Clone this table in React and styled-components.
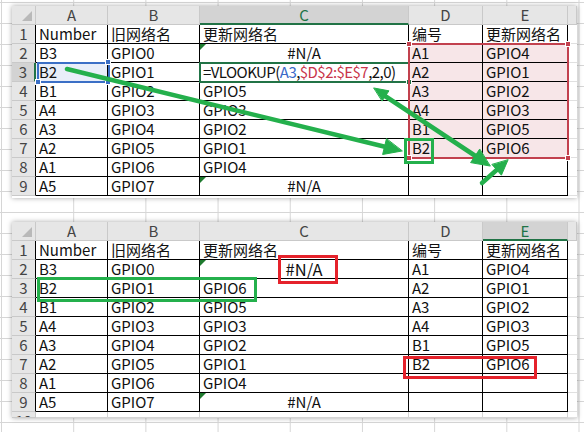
import React from "react";
import styled, { createGlobalStyle, css } from "styled-components";

const GlobalStyle = createGlobalStyle`
  body {
    margin: 0;
    font-family: "Noto Sans CJK SC", "Liberation Sans", sans-serif;
  }
`;

const GREEN = "#24b04c";
const EXCEL = "#217346";

const Page = styled.div`
  width: 584px;
  height: 432px;
  box-sizing: border-box;
  overflow: hidden;
  padding: 6px 0 0 12px;
  display: flex;
  flex-direction: column;
  gap: 24px;
  background-color: #fff;
  background-image: linear-gradient(to right, #d6d6d6 1px, transparent 1px),
    linear-gradient(to bottom, #d6d6d6 1px, transparent 1px);
  background-size: 72.2px 21px;
  background-position: 1px 2px;
`;

const Sheet = styled.div`
  position: relative;
  width: 565px;
  height: ${(p) => p.$h}px;
  background: #fff;
  box-shadow: 0 0 5px rgba(0, 0, 0, 0.35);
`;

const Grid = styled.div`
  display: grid;
  grid-template-columns: 24px 72px 92px 209px 74px 85px 9px;
  grid-template-rows: repeat(10, 19px) ${(p) => (p.$tail ? "6px" : "")};
`;

const ColHead = styled.div`
  box-sizing: border-box;
  background: ${(p) => (p.$active ? "#d3d3d3" : "#e6e6e6")};
  color: ${(p) => (p.$active ? EXCEL : "#444")};
  border-right: 1px solid #c9c9c9;
  border-bottom: ${(p) => (p.$active ? `2px solid ${EXCEL}` : "1px solid #c9c9c9")};
  font-size: 15px;
  line-height: 18px;
  text-align: center;
`;

const Corner = styled(ColHead)`
  position: relative;
  &::after {
    content: "";
    position: absolute;
    right: 3px;
    bottom: 3px;
    border-bottom: 10px solid #b9b9b9;
    border-left: 10px solid transparent;
  }
`;

const RowHead = styled.div`
  box-sizing: border-box;
  overflow: ${(p) => (p.$clip ? "hidden" : "visible")};
  background: ${(p) => (p.$active ? "#d3d3d3" : "#e6e6e6")};
  color: #444;
  font-size: 15px;
  line-height: 18px;
  text-align: center;
  border-bottom: 1px solid #c9c9c9;
  border-right: ${(p) =>
    p.$active ? `2px solid ${EXCEL}` : `1px solid ${p.$line}`};
`;

const Cell = styled.div`
  position: relative;
  box-sizing: border-box;
  padding: 0 3px;
  border-right: 1px solid ${(p) => p.$line};
  border-bottom: 1px solid ${(p) => p.$line};
  background: ${(p) => p.$fill || "transparent"};
  font-size: ${(p) => (p.$big ? 16.5 : 15)}px;
  line-height: 18px;
  color: #111;
  text-align: ${(p) => (p.$center ? "center" : "left")};
  white-space: nowrap;
  ${(p) =>
    p.$err &&
    css`
      &::before {
        content: "";
        position: absolute;
        left: 0;
        top: 0;
        border-top: 6px solid #1e7a2e;
        border-right: 6px solid transparent;
      }
    `}
`;

const Formula = styled.span`
  letter-spacing: -0.55px;
`;

const Spare = styled.div`
  border-bottom: 1px solid #e0e0e0;
`;

const Ref = styled.span`
  color: ${(p) => p.$c};
`;

const Frame = styled.div`
  position: absolute;
  left: ${(p) => p.$x}px;
  top: ${(p) => p.$y}px;
  width: ${(p) => p.$w}px;
  height: ${(p) => p.$h}px;
  box-sizing: border-box;
  border: ${(p) => p.$t || 2}px solid ${(p) => p.$c};
  pointer-events: none;
`;

const Handle = styled.div`
  position: absolute;
  left: ${(p) => p.$x - 3}px;
  top: ${(p) => p.$y - 3}px;
  width: 6px;
  height: 6px;
  background: ${(p) => p.$c};
  border: 1px solid #fff;
  box-sizing: border-box;
`;

const Arrows = styled.svg`
  position: absolute;
  left: 0;
  top: 0;
  pointer-events: none;
`;

function head(x1, y1, x2, y2, len = 18, half = 8) {
  const dx = x2 - x1;
  const dy = y2 - y1;
  const d = Math.hypot(dx, dy);
  const ux = dx / d;
  const uy = dy / d;
  const bx = x2 - ux * len;
  const by = y2 - uy * len;
  return `${x2},${y2} ${bx - uy * half},${by + ux * half} ${bx + uy * half},${by - ux * half}`;
}

const formula = (
  <Formula>
    =VLOOKUP(<Ref $c="#3a6ac8">A3</Ref>,<Ref $c="#c8354a">$D$2:$E$7</Ref>,2,0)
  </Formula>
);

const NA = { text: "#N/A", center: true, err: true };

const baseRows = [
  ["Number", "旧网络名", "更新网络名", "编号", "更新网络名"],
  ["B3", "GPIO0", NA, "A1", "GPIO4"],
  ["B2", "GPIO1", "", "A2", "GPIO1"],
  ["B1", "GPIO2", "GPIO5", "A3", "GPIO2"],
  ["A4", "GPIO3", "GPIO3", "A4", "GPIO3"],
  ["A3", "GPIO4", "GPIO2", "B1", "GPIO5"],
  ["A2", "GPIO5", "GPIO1", "B2", "GPIO6"],
  ["A1", "GPIO6", "GPIO4", "", ""],
  ["A5", "GPIO7", NA, "", ""],
];

function SheetGrid({ rows, activeCol, activeRow, fill, extraRow }) {
  return (
    <Grid $tail={extraRow}>
      <Corner />
      {["A", "B", "C", "D", "E"].map((c) => (
        <ColHead key={c} $active={c === activeCol}>
          {c}
        </ColHead>
      ))}
      <ColHead />
      {rows.map((row, r) => (
        <React.Fragment key={r}>
          <RowHead $line="#000" $active={r + 1 === activeRow}>
            {r + 1}
          </RowHead>
          {row.map((v, c) => {
            const spec = typeof v === "object" && v && v.text ? v : { text: v };
            return (
              <Cell
                key={c}
                $line="#000"
                $center={spec.center}
                $err={spec.err}
                $big={spec.big}
                $fill={fill && fill(r + 1, c)}
              >
                {spec.text}
              </Cell>
            );
          })}
          <Spare />
        </React.Fragment>
      ))}
      {extraRow && (
        <>
          <RowHead $line="#c9c9c9" $clip>
            10
          </RowHead>
          {[0, 1, 2, 3, 4].map((c) => (
            <Cell key={c} $line="#d4d4d4" />
          ))}
          <Spare />
        </>
      )}
    </Grid>
  );
}

function TopSheet() {
  const rows = baseRows.map((r) => [...r]);
  rows[2][2] = { text: formula };
  const fill = (r, c) => {
    if (r === 3 && c === 0) return "#e8eef9";
    if (r >= 2 && r <= 7 && (c === 3 || c === 4)) return "#f7e6e8";
    return null;
  };
  const a1 = [55, 63, 390, 145];
  const a2 = [362, 82, 478, 160];
  const a3 = [470, 177, 496, 154];
  return (
    <Sheet $h={192}>
      <SheetGrid rows={rows} activeCol="C" activeRow={3} fill={fill} />
      <Frame $x={25} $y={56} $w={73} $h={21} $c="#3b6fc6" />
      <Handle $x={96} $y={56} $c="#3b6fc6" />
      <Handle $x={26} $y={76} $c="#3b6fc6" />
      <Handle $x={96} $y={76} $c="#3b6fc6" />
      <Frame $x={187} $y={56} $w={211} $h={21} $c={EXCEL} />
      <Handle $x={397} $y={76} $c={EXCEL} />
      <Frame $x={396} $y={37} $w={161} $h={116} $c="#c2414e" />
      <Handle $x={397} $y={38} $c="#c2414e" />
      <Handle $x={556} $y={38} $c="#c2414e" />
      <Handle $x={397} $y={152} $c="#c2414e" />
      <Handle $x={556} $y={152} $c="#c2414e" />
      <Frame $x={392} $y={132} $w={30} $h={26} $t={3} $c={GREEN} />
      <Arrows width="565" height="192">
        <g stroke={GREEN} strokeWidth="4.5" strokeLinecap="round" fill={GREEN}>
          <line x1={a1[0]} y1={a1[1]} x2={a1[2] - 12} y2={a1[3] - 3} />
          <polygon points={head(...a1)} strokeWidth="1" />
          <line x1={a2[0] + 8} y1={a2[1] + 6} x2={a2[2] - 10} y2={a2[3] - 7} />
          <polygon points={head(a2[2], a2[3], a2[0], a2[1], 14, 6)} strokeWidth="1" />
          <polygon points={head(...a2)} strokeWidth="1" />
          <line x1={a3[0]} y1={a3[1]} x2={a3[2] - 8} y2={a3[3] + 7} />
          <polygon points={head(...a3, 15, 7)} strokeWidth="1" />
        </g>
      </Arrows>
    </Sheet>
  );
}

function BottomSheet() {
  const rows = baseRows.map((r) => [...r]);
  rows[1][2] = { ...NA, big: true };
  rows[2][2] = "GPIO6";
  return (
    <Sheet $h={196}>
      <SheetGrid rows={rows} activeCol="E" extraRow />
      <Frame $x={266} $y={33} $w={60} $h={29} $t={3} $c="#e5222b" />
      <Frame $x={25} $y={55} $w={220} $h={25} $t={3} $c={GREEN} />
      <Frame $x={391} $y={134} $w={134} $h={23} $t={3} $c="#e5222b" />
    </Sheet>
  );
}

export default function App() {
  return (
    <>
      <GlobalStyle />
      <Page>
        <TopSheet />
        <BottomSheet />
      </Page>
    </>
  );
}
